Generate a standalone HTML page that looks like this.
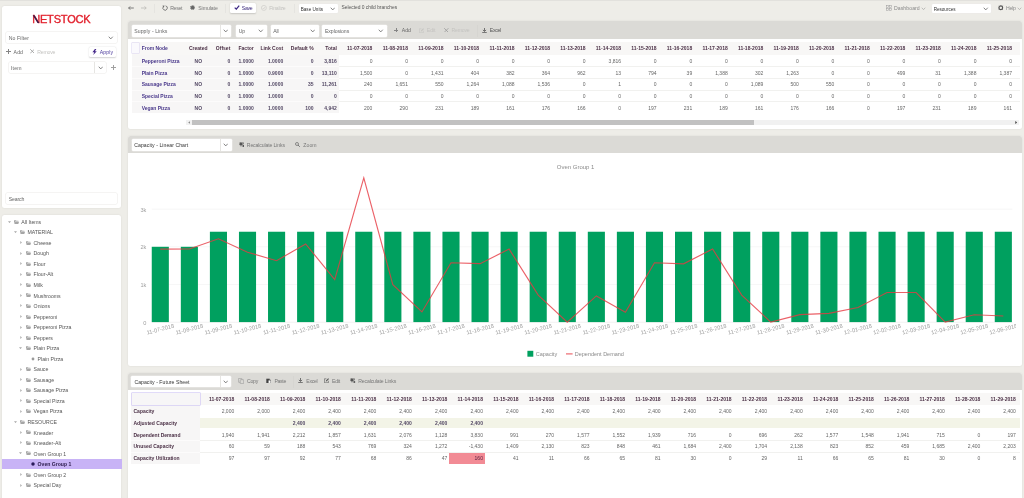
<!DOCTYPE html>
<html lang="en"><head><meta charset="utf-8"><title>Netstock - Capacity</title>
<style>
html,body{margin:0;padding:0;}
body{width:1024px;height:498px;overflow:hidden;background:#eeede8;font-family:"Liberation Sans",sans-serif;position:relative;}
#r{position:absolute;left:0;top:0;width:1024px;height:498px;overflow:hidden;will-change:transform;}
#r div,#r span,#r svg{position:absolute;}
#r span span{position:static;}
.t{white-space:nowrap;font-size:5.3px;color:#555;}
.panel{background:#fff;border-radius:2.5px;box-shadow:0 0 2px rgba(0,0,0,.09);overflow:hidden;}
.sel{background:#fff;border-radius:1.2px;box-shadow:0 0 0 .5px #ebeae7;}
.tb{color:#777;font-size:5.15px;}
.dis{color:#c4c3c0;}
.sm{font-size:4.6px;}
.th{color:#4a2f45;font-weight:bold;font-size:5px;}
.td{color:#666;font-size:5px;}
.tdb{color:#554a66;font-weight:bold;font-size:5px;}
.lnk{color:#4b3a8c;font-weight:bold;font-size:5px;letter-spacing:-0.03px;}
.tree{color:#555;font-size:5.2px;}
.ax{font-family:"Liberation Sans",sans-serif;fill:#a0a0a0;font-size:5.6px;}
</style></head>
<body><div id="r">
<div class="panel" style="left:2px;top:6.2px;width:119.3px;height:202.3px;"></div>
<div class="panel" style="left:2px;top:215.2px;width:119.3px;height:300px;"></div>
<div style="left:0.00px;top:0.00px;width:1024.00px;height:0.80px;background:#e2e1dd;"></div>
<span class="t " style="left:-38.70px;width:200px;text-align:center;top:12.20px;height:14px;line-height:14px;color:#e2232f;font-size:11px;letter-spacing:-0.18px;-webkit-text-stroke:0.38px #e2232f;">NETSTOCK</span>
<svg style="left:32.00px;top:15.00px;" width="9" height="9" viewBox="0 0 9 9"><path d="M0.7 0.3 L2.5 0.3 L7.3 8 L5.5 8Z" fill="#3a1a4a"/></svg>
<div class="sel" style="left:6.00px;top:32.00px;width:111.00px;height:11.20px;"></div>
<span class="t tb" style="left:8.75px;top:32.60px;height:10px;line-height:10px;font-size:5.15px;letter-spacing:0.099px;color:#666;">No Filter</span>
<svg style="left:108.05px;top:35.85px;" width="5.5" height="3.9" viewBox="0 0 5.5 3.9"><path d="M1 1 L2.75 2.9 L4.5 1" fill="none" stroke="#666" stroke-width="0.8" stroke-linecap="round" stroke-linejoin="round"/></svg>
<div style="left:6.42px;top:51.35px;width:4.50px;height:0.70px;background:#858585;"></div>
<div style="left:8.32px;top:49.45px;width:0.70px;height:4.50px;background:#858585;"></div>
<span class="t tb" style="left:13.60px;top:46.60px;height:10px;line-height:10px;font-size:5.15px;letter-spacing:0.118px;color:#666;">Add</span>
<svg style="left:29.90px;top:49.40px;" width="4.6" height="4.6" viewBox="0 0 4.6 4.6"><path d="M0.2 0.2 L4.3999999999999995 4.3999999999999995 M4.3999999999999995 0.2 L0.2 4.3999999999999995" stroke="#999" stroke-width="0.8" fill="none"/></svg>
<span class="t tb dis" style="left:37.20px;top:46.60px;height:10px;line-height:10px;font-size:5.15px;letter-spacing:-0.175px;">Remove</span>
<div style="left:89px;top:46.6px;width:27.3px;height:10.6px;background:#fff;border-radius:1.5px;box-shadow:0 0.3px 1.6px rgba(0,0,0,.18);"></div>
<svg style="left:92.20px;top:48.60px;" width="5.2" height="6" viewBox="0 0 5.2 6"><path d="M2.9 0 L0.4 3.3 L2.3 3.3 L1.2 6 L4.8 2.3 L2.9 2.3 L4.4 0Z" fill="#45288a"/></svg>
<span class="t tb" style="left:99.80px;top:46.70px;height:10px;line-height:10px;font-size:5.15px;letter-spacing:0.079px;color:#4b3a9c;">Apply</span>
<div class="sel" style="left:8.70px;top:61.80px;width:97.80px;height:11.70px;"></div>
<span class="t tb" style="left:10.70px;top:62.65px;height:10px;line-height:10px;font-size:5.15px;letter-spacing:0.300px;color:#666;">Item</span>
<div style="left:94.20px;top:61.80px;width:0.50px;height:11.70px;background:#e6e5e2;"></div>
<svg style="left:97.65px;top:65.90px;" width="5.5" height="3.9" viewBox="0 0 5.5 3.9"><path d="M1 1 L2.75 2.9 L4.5 1" fill="none" stroke="#666" stroke-width="0.8" stroke-linecap="round" stroke-linejoin="round"/></svg>
<div style="left:110.65px;top:66.60px;width:5.10px;height:1.00px;background:#a0a0a0;"></div>
<div style="left:112.70px;top:64.55px;width:1.00px;height:5.10px;background:#a0a0a0;"></div>
<div class="sel" style="left:6px;top:192.6px;width:111.4px;height:11.4px;"></div>
<span class="t tb" style="left:8.80px;top:193.50px;height:10px;line-height:10px;font-size:5.15px;letter-spacing:-0.144px;color:#666;">Search</span>
<svg style="left:7.60px;top:220.50px;" width="3" height="2.2" viewBox="0 0 3 2.2"><path d="M0 0.3 H3 L1.5 2.1Z" fill="#a8a8a8"/></svg>
<svg style="left:14.10px;top:219.70px;" width="5.2" height="4" viewBox="0 0 5.2 4"><path d="M0 0.2 H1.9 L2.5 0.8 H4.4 V1.5 H1.1 L0.2 3.7 H0Z" fill="#a6a6a6"/><path d="M1.3 1.7 H5.1 L4.3 3.9 H0.4Z" fill="#a6a6a6"/></svg>
<span class="t tree" style="left:21.30px;top:216.80px;height:10px;line-height:10px;">All Items</span>
<svg style="left:13.50px;top:231.03px;" width="3" height="2.2" viewBox="0 0 3 2.2"><path d="M0 0.3 H3 L1.5 2.1Z" fill="#a8a8a8"/></svg>
<svg style="left:20.00px;top:230.23px;" width="5.2" height="4" viewBox="0 0 5.2 4"><path d="M0 0.2 H1.9 L2.5 0.8 H4.4 V1.5 H1.1 L0.2 3.7 H0Z" fill="#a6a6a6"/><path d="M1.3 1.7 H5.1 L4.3 3.9 H0.4Z" fill="#a6a6a6"/></svg>
<span class="t tree" style="left:27.45px;top:227.33px;height:10px;line-height:10px;">MATERIAL</span>
<svg style="left:20.10px;top:241.27px;" width="2.2" height="3" viewBox="0 0 2.2 3"><path d="M0.3 0 L1.9 1.5 L0.3 3Z" fill="#a8a8a8"/></svg>
<svg style="left:25.90px;top:240.77px;" width="5.2" height="4" viewBox="0 0 5.2 4"><path d="M0 0.2 H1.9 L2.5 0.8 H4.4 V1.5 H1.1 L0.2 3.7 H0Z" fill="#a6a6a6"/><path d="M1.3 1.7 H5.1 L4.3 3.9 H0.4Z" fill="#a6a6a6"/></svg>
<span class="t tree" style="left:33.60px;top:237.87px;height:10px;line-height:10px;">Cheese</span>
<svg style="left:20.10px;top:251.80px;" width="2.2" height="3" viewBox="0 0 2.2 3"><path d="M0.3 0 L1.9 1.5 L0.3 3Z" fill="#a8a8a8"/></svg>
<svg style="left:25.90px;top:251.30px;" width="5.2" height="4" viewBox="0 0 5.2 4"><path d="M0 0.2 H1.9 L2.5 0.8 H4.4 V1.5 H1.1 L0.2 3.7 H0Z" fill="#a6a6a6"/><path d="M1.3 1.7 H5.1 L4.3 3.9 H0.4Z" fill="#a6a6a6"/></svg>
<span class="t tree" style="left:33.60px;top:248.40px;height:10px;line-height:10px;">Dough</span>
<svg style="left:20.10px;top:262.34px;" width="2.2" height="3" viewBox="0 0 2.2 3"><path d="M0.3 0 L1.9 1.5 L0.3 3Z" fill="#a8a8a8"/></svg>
<svg style="left:25.90px;top:261.84px;" width="5.2" height="4" viewBox="0 0 5.2 4"><path d="M0 0.2 H1.9 L2.5 0.8 H4.4 V1.5 H1.1 L0.2 3.7 H0Z" fill="#a6a6a6"/><path d="M1.3 1.7 H5.1 L4.3 3.9 H0.4Z" fill="#a6a6a6"/></svg>
<span class="t tree" style="left:33.60px;top:258.94px;height:10px;line-height:10px;">Flour</span>
<svg style="left:20.10px;top:272.88px;" width="2.2" height="3" viewBox="0 0 2.2 3"><path d="M0.3 0 L1.9 1.5 L0.3 3Z" fill="#a8a8a8"/></svg>
<svg style="left:25.90px;top:272.38px;" width="5.2" height="4" viewBox="0 0 5.2 4"><path d="M0 0.2 H1.9 L2.5 0.8 H4.4 V1.5 H1.1 L0.2 3.7 H0Z" fill="#a6a6a6"/><path d="M1.3 1.7 H5.1 L4.3 3.9 H0.4Z" fill="#a6a6a6"/></svg>
<span class="t tree" style="left:33.60px;top:269.48px;height:10px;line-height:10px;">Flour-Alt</span>
<svg style="left:20.10px;top:283.41px;" width="2.2" height="3" viewBox="0 0 2.2 3"><path d="M0.3 0 L1.9 1.5 L0.3 3Z" fill="#a8a8a8"/></svg>
<svg style="left:25.90px;top:282.91px;" width="5.2" height="4" viewBox="0 0 5.2 4"><path d="M0 0.2 H1.9 L2.5 0.8 H4.4 V1.5 H1.1 L0.2 3.7 H0Z" fill="#a6a6a6"/><path d="M1.3 1.7 H5.1 L4.3 3.9 H0.4Z" fill="#a6a6a6"/></svg>
<span class="t tree" style="left:33.60px;top:280.01px;height:10px;line-height:10px;">Milk</span>
<svg style="left:20.10px;top:293.94px;" width="2.2" height="3" viewBox="0 0 2.2 3"><path d="M0.3 0 L1.9 1.5 L0.3 3Z" fill="#a8a8a8"/></svg>
<svg style="left:25.90px;top:293.44px;" width="5.2" height="4" viewBox="0 0 5.2 4"><path d="M0 0.2 H1.9 L2.5 0.8 H4.4 V1.5 H1.1 L0.2 3.7 H0Z" fill="#a6a6a6"/><path d="M1.3 1.7 H5.1 L4.3 3.9 H0.4Z" fill="#a6a6a6"/></svg>
<span class="t tree" style="left:33.60px;top:290.55px;height:10px;line-height:10px;">Mushrooms</span>
<svg style="left:20.10px;top:304.48px;" width="2.2" height="3" viewBox="0 0 2.2 3"><path d="M0.3 0 L1.9 1.5 L0.3 3Z" fill="#a8a8a8"/></svg>
<svg style="left:25.90px;top:303.98px;" width="5.2" height="4" viewBox="0 0 5.2 4"><path d="M0 0.2 H1.9 L2.5 0.8 H4.4 V1.5 H1.1 L0.2 3.7 H0Z" fill="#a6a6a6"/><path d="M1.3 1.7 H5.1 L4.3 3.9 H0.4Z" fill="#a6a6a6"/></svg>
<span class="t tree" style="left:33.60px;top:301.08px;height:10px;line-height:10px;">Onions</span>
<svg style="left:20.10px;top:315.01px;" width="2.2" height="3" viewBox="0 0 2.2 3"><path d="M0.3 0 L1.9 1.5 L0.3 3Z" fill="#a8a8a8"/></svg>
<svg style="left:25.90px;top:314.51px;" width="5.2" height="4" viewBox="0 0 5.2 4"><path d="M0 0.2 H1.9 L2.5 0.8 H4.4 V1.5 H1.1 L0.2 3.7 H0Z" fill="#a6a6a6"/><path d="M1.3 1.7 H5.1 L4.3 3.9 H0.4Z" fill="#a6a6a6"/></svg>
<span class="t tree" style="left:33.60px;top:311.62px;height:10px;line-height:10px;">Pepperoni</span>
<svg style="left:20.10px;top:325.55px;" width="2.2" height="3" viewBox="0 0 2.2 3"><path d="M0.3 0 L1.9 1.5 L0.3 3Z" fill="#a8a8a8"/></svg>
<svg style="left:25.90px;top:325.05px;" width="5.2" height="4" viewBox="0 0 5.2 4"><path d="M0 0.2 H1.9 L2.5 0.8 H4.4 V1.5 H1.1 L0.2 3.7 H0Z" fill="#a6a6a6"/><path d="M1.3 1.7 H5.1 L4.3 3.9 H0.4Z" fill="#a6a6a6"/></svg>
<span class="t tree" style="left:33.60px;top:322.15px;height:10px;line-height:10px;">Pepperoni Pizza</span>
<svg style="left:20.10px;top:336.08px;" width="2.2" height="3" viewBox="0 0 2.2 3"><path d="M0.3 0 L1.9 1.5 L0.3 3Z" fill="#a8a8a8"/></svg>
<svg style="left:25.90px;top:335.58px;" width="5.2" height="4" viewBox="0 0 5.2 4"><path d="M0 0.2 H1.9 L2.5 0.8 H4.4 V1.5 H1.1 L0.2 3.7 H0Z" fill="#a6a6a6"/><path d="M1.3 1.7 H5.1 L4.3 3.9 H0.4Z" fill="#a6a6a6"/></svg>
<span class="t tree" style="left:33.60px;top:332.69px;height:10px;line-height:10px;">Peppers</span>
<svg style="left:19.40px;top:346.92px;" width="3" height="2.2" viewBox="0 0 3 2.2"><path d="M0 0.3 H3 L1.5 2.1Z" fill="#a8a8a8"/></svg>
<svg style="left:25.90px;top:346.12px;" width="5.2" height="4" viewBox="0 0 5.2 4"><path d="M0 0.2 H1.9 L2.5 0.8 H4.4 V1.5 H1.1 L0.2 3.7 H0Z" fill="#a6a6a6"/><path d="M1.3 1.7 H5.1 L4.3 3.9 H0.4Z" fill="#a6a6a6"/></svg>
<span class="t tree" style="left:33.60px;top:343.22px;height:10px;line-height:10px;">Plain Pizza</span>
<svg style="left:31.20px;top:356.65px;" width="4" height="4" viewBox="0 0 4 4"><circle cx="2" cy="2" r="1.4" fill="#9a9a9a"/></svg>
<span class="t tree" style="left:37.60px;top:353.75px;height:10px;line-height:10px;">Plain Pizza</span>
<svg style="left:20.10px;top:367.69px;" width="2.2" height="3" viewBox="0 0 2.2 3"><path d="M0.3 0 L1.9 1.5 L0.3 3Z" fill="#a8a8a8"/></svg>
<svg style="left:25.90px;top:367.19px;" width="5.2" height="4" viewBox="0 0 5.2 4"><path d="M0 0.2 H1.9 L2.5 0.8 H4.4 V1.5 H1.1 L0.2 3.7 H0Z" fill="#a6a6a6"/><path d="M1.3 1.7 H5.1 L4.3 3.9 H0.4Z" fill="#a6a6a6"/></svg>
<span class="t tree" style="left:33.60px;top:364.29px;height:10px;line-height:10px;">Sauce</span>
<svg style="left:20.10px;top:378.23px;" width="2.2" height="3" viewBox="0 0 2.2 3"><path d="M0.3 0 L1.9 1.5 L0.3 3Z" fill="#a8a8a8"/></svg>
<svg style="left:25.90px;top:377.73px;" width="5.2" height="4" viewBox="0 0 5.2 4"><path d="M0 0.2 H1.9 L2.5 0.8 H4.4 V1.5 H1.1 L0.2 3.7 H0Z" fill="#a6a6a6"/><path d="M1.3 1.7 H5.1 L4.3 3.9 H0.4Z" fill="#a6a6a6"/></svg>
<span class="t tree" style="left:33.60px;top:374.83px;height:10px;line-height:10px;">Sausage</span>
<svg style="left:20.10px;top:388.76px;" width="2.2" height="3" viewBox="0 0 2.2 3"><path d="M0.3 0 L1.9 1.5 L0.3 3Z" fill="#a8a8a8"/></svg>
<svg style="left:25.90px;top:388.26px;" width="5.2" height="4" viewBox="0 0 5.2 4"><path d="M0 0.2 H1.9 L2.5 0.8 H4.4 V1.5 H1.1 L0.2 3.7 H0Z" fill="#a6a6a6"/><path d="M1.3 1.7 H5.1 L4.3 3.9 H0.4Z" fill="#a6a6a6"/></svg>
<span class="t tree" style="left:33.60px;top:385.36px;height:10px;line-height:10px;">Sausage Pizza</span>
<svg style="left:20.10px;top:399.29px;" width="2.2" height="3" viewBox="0 0 2.2 3"><path d="M0.3 0 L1.9 1.5 L0.3 3Z" fill="#a8a8a8"/></svg>
<svg style="left:25.90px;top:398.79px;" width="5.2" height="4" viewBox="0 0 5.2 4"><path d="M0 0.2 H1.9 L2.5 0.8 H4.4 V1.5 H1.1 L0.2 3.7 H0Z" fill="#a6a6a6"/><path d="M1.3 1.7 H5.1 L4.3 3.9 H0.4Z" fill="#a6a6a6"/></svg>
<span class="t tree" style="left:33.60px;top:395.89px;height:10px;line-height:10px;">Special Pizza</span>
<svg style="left:20.10px;top:409.83px;" width="2.2" height="3" viewBox="0 0 2.2 3"><path d="M0.3 0 L1.9 1.5 L0.3 3Z" fill="#a8a8a8"/></svg>
<svg style="left:25.90px;top:409.33px;" width="5.2" height="4" viewBox="0 0 5.2 4"><path d="M0 0.2 H1.9 L2.5 0.8 H4.4 V1.5 H1.1 L0.2 3.7 H0Z" fill="#a6a6a6"/><path d="M1.3 1.7 H5.1 L4.3 3.9 H0.4Z" fill="#a6a6a6"/></svg>
<span class="t tree" style="left:33.60px;top:406.43px;height:10px;line-height:10px;">Vegan Pizza</span>
<svg style="left:13.50px;top:420.67px;" width="3" height="2.2" viewBox="0 0 3 2.2"><path d="M0 0.3 H3 L1.5 2.1Z" fill="#a8a8a8"/></svg>
<svg style="left:20.00px;top:419.87px;" width="5.2" height="4" viewBox="0 0 5.2 4"><path d="M0 0.2 H1.9 L2.5 0.8 H4.4 V1.5 H1.1 L0.2 3.7 H0Z" fill="#a6a6a6"/><path d="M1.3 1.7 H5.1 L4.3 3.9 H0.4Z" fill="#a6a6a6"/></svg>
<span class="t tree" style="left:27.45px;top:416.97px;height:10px;line-height:10px;">RESOURCE</span>
<svg style="left:20.10px;top:430.90px;" width="2.2" height="3" viewBox="0 0 2.2 3"><path d="M0.3 0 L1.9 1.5 L0.3 3Z" fill="#a8a8a8"/></svg>
<svg style="left:25.90px;top:430.40px;" width="5.2" height="4" viewBox="0 0 5.2 4"><path d="M0 0.2 H1.9 L2.5 0.8 H4.4 V1.5 H1.1 L0.2 3.7 H0Z" fill="#a6a6a6"/><path d="M1.3 1.7 H5.1 L4.3 3.9 H0.4Z" fill="#a6a6a6"/></svg>
<span class="t tree" style="left:33.60px;top:427.50px;height:10px;line-height:10px;">Kneader</span>
<svg style="left:20.10px;top:441.44px;" width="2.2" height="3" viewBox="0 0 2.2 3"><path d="M0.3 0 L1.9 1.5 L0.3 3Z" fill="#a8a8a8"/></svg>
<svg style="left:25.90px;top:440.94px;" width="5.2" height="4" viewBox="0 0 5.2 4"><path d="M0 0.2 H1.9 L2.5 0.8 H4.4 V1.5 H1.1 L0.2 3.7 H0Z" fill="#a6a6a6"/><path d="M1.3 1.7 H5.1 L4.3 3.9 H0.4Z" fill="#a6a6a6"/></svg>
<span class="t tree" style="left:33.60px;top:438.04px;height:10px;line-height:10px;">Kneader-Alt</span>
<svg style="left:19.40px;top:452.27px;" width="3" height="2.2" viewBox="0 0 3 2.2"><path d="M0 0.3 H3 L1.5 2.1Z" fill="#a8a8a8"/></svg>
<svg style="left:25.90px;top:451.47px;" width="5.2" height="4" viewBox="0 0 5.2 4"><path d="M0 0.2 H1.9 L2.5 0.8 H4.4 V1.5 H1.1 L0.2 3.7 H0Z" fill="#a6a6a6"/><path d="M1.3 1.7 H5.1 L4.3 3.9 H0.4Z" fill="#a6a6a6"/></svg>
<span class="t tree" style="left:33.60px;top:448.57px;height:10px;line-height:10px;">Oven Group 1</span>
<div style="left:2.00px;top:459.11px;width:119.50px;height:9.90px;background:#c8b3f6;"></div>
<svg style="left:31.20px;top:462.00px;" width="4" height="4" viewBox="0 0 4 4"><circle cx="2" cy="2" r="1.75" fill="#2a1a5a"/></svg>
<span class="t tree" style="left:37.60px;top:459.11px;height:10px;line-height:10px;color:#2a1a4a;font-weight:bold;font-size:5.1px;">Oven Group 1</span>
<svg style="left:20.10px;top:473.04px;" width="2.2" height="3" viewBox="0 0 2.2 3"><path d="M0.3 0 L1.9 1.5 L0.3 3Z" fill="#a8a8a8"/></svg>
<svg style="left:25.90px;top:472.54px;" width="5.2" height="4" viewBox="0 0 5.2 4"><path d="M0 0.2 H1.9 L2.5 0.8 H4.4 V1.5 H1.1 L0.2 3.7 H0Z" fill="#a6a6a6"/><path d="M1.3 1.7 H5.1 L4.3 3.9 H0.4Z" fill="#a6a6a6"/></svg>
<span class="t tree" style="left:33.60px;top:469.64px;height:10px;line-height:10px;">Oven Group 2</span>
<svg style="left:20.10px;top:483.57px;" width="2.2" height="3" viewBox="0 0 2.2 3"><path d="M0.3 0 L1.9 1.5 L0.3 3Z" fill="#a8a8a8"/></svg>
<svg style="left:25.90px;top:483.07px;" width="5.2" height="4" viewBox="0 0 5.2 4"><path d="M0 0.2 H1.9 L2.5 0.8 H4.4 V1.5 H1.1 L0.2 3.7 H0Z" fill="#a6a6a6"/><path d="M1.3 1.7 H5.1 L4.3 3.9 H0.4Z" fill="#a6a6a6"/></svg>
<span class="t tree" style="left:33.60px;top:480.18px;height:10px;line-height:10px;">Special Day</span>
<svg style="left:128.10px;top:5.90px;" width="5.8" height="4" viewBox="0 0 5.8 4"><path d="M5.8 2 H0.6 M2.2 0.4 L0.6 2 L2.2 3.6" fill="none" stroke="#666" stroke-width="0.85"/></svg>
<svg style="left:141.40px;top:5.90px;" width="5.8" height="4" viewBox="0 0 5.8 4"><path d="M0 2 H5.2 M3.5999999999999996 0.4 L5.2 2 L3.5999999999999996 3.6" fill="none" stroke="#bdbcb8" stroke-width="0.85"/></svg>
<div style="left:154.10px;top:3.80px;width:0.50px;height:8.80px;background:#e5e4e0;"></div>
<svg style="left:161.70px;top:5.00px;" width="6" height="6" viewBox="0 0 6 6"><path d="M1.5 1.5 A2.2 2.2 0 1 0 3.6 0.85" fill="none" stroke="#666" stroke-width="0.8"/><path d="M0.3 0.7 L2.5 0.5 L1.8 2.5Z" fill="#666"/></svg>
<span class="t tb" style="left:170.20px;top:3.30px;height:10px;line-height:10px;font-size:5.15px;letter-spacing:-0.300px;">Reset</span>
<svg style="left:190.30px;top:5.30px;" width="5.2" height="5.2" viewBox="0 0 5.2 5.2"><circle cx="2.6" cy="2.6" r="1.9" fill="#666"/><circle cx="2.6" cy="2.6" r="2.3" fill="none" stroke="#666" stroke-width="0.9" stroke-dasharray="0.9 0.9"/></svg>
<span class="t tb" style="left:198.20px;top:3.30px;height:10px;line-height:10px;font-size:5.15px;letter-spacing:-0.048px;">Simulate</span>
<div style="left:225.30px;top:3.80px;width:0.50px;height:8.80px;background:#e5e4e0;"></div>
<div style="left:230px;top:3.3px;width:26.3px;height:10.1px;background:#fff;border-radius:1.5px;box-shadow:0 0.3px 1.6px rgba(0,0,0,.16);"></div>
<svg style="left:233.60px;top:5.30px;" width="6" height="5" viewBox="0 0 6 5"><path d="M0.7 2.6 L2.3 4.1 L5.2 0.7" fill="none" stroke="#3f2a86" stroke-width="1.3"/></svg>
<span class="t tb" style="left:241.75px;top:3.40px;height:10px;line-height:10px;font-size:5.15px;letter-spacing:-0.300px;color:#3b2a7c;">Save</span>
<svg style="left:261.10px;top:5.20px;" width="5.8" height="5.8" viewBox="0 0 5.8 5.8"><circle cx="2.9" cy="2.9" r="2.5" fill="none" stroke="#c9c8c5" stroke-width="0.6"/><path d="M1.7 3 L2.6 3.9 L4.2 2" fill="none" stroke="#c9c8c5" stroke-width="0.6"/></svg>
<span class="t tb dis" style="left:269.25px;top:3.30px;height:10px;line-height:10px;font-size:5.15px;letter-spacing:-0.178px;">Finalize</span>
<div style="left:293.50px;top:3.80px;width:0.50px;height:8.80px;background:#e5e4e0;"></div>
<div class="sel" style="left:298.80px;top:4.00px;width:39.20px;height:9.20px;"></div>
<span class="t tb sm" style="left:300.75px;top:5.20px;height:10px;line-height:10px;font-size:4.6px;letter-spacing:0.001px;color:#333;">Base Units</span>
<svg style="left:329.95px;top:6.85px;" width="5.5" height="3.9" viewBox="0 0 5.5 3.9"><path d="M1 1 L2.75 2.9 L4.5 1" fill="none" stroke="#666" stroke-width="0.8" stroke-linecap="round" stroke-linejoin="round"/></svg>
<span class="t tb" style="left:341.50px;top:2.80px;height:10px;line-height:10px;font-size:4.9px;letter-spacing:-0.013px;color:#555;">Selected 0 child branches</span>
<svg style="left:886.00px;top:5.20px;" width="6" height="6" viewBox="0 0 6 6"><g fill="none" stroke="#999" stroke-width="0.5"><rect x="0.4" y="0.4" width="2.1" height="2.1"/><rect x="3.3" y="0.4" width="2.1" height="2.1"/><rect x="0.4" y="3.3" width="2.1" height="2.1"/><rect x="3.3" y="3.3" width="2.1" height="2.1"/></g></svg>
<span class="t tb" style="left:894.00px;top:3.30px;height:10px;line-height:10px;font-size:5.15px;letter-spacing:0.069px;color:#888;">Dashboard</span>
<svg style="left:921.10px;top:6.80px;" width="5" height="3.6" viewBox="0 0 5 3.6"><path d="M1 1 L2.5 2.6 L4 1" fill="none" stroke="#999" stroke-width="0.6" stroke-linecap="round" stroke-linejoin="round"/></svg>
<div class="sel" style="left:931.90px;top:3.80px;width:59.20px;height:9.30px;"></div>
<span class="t tb sm" style="left:933.75px;top:5.05px;height:10px;line-height:10px;font-size:4.6px;letter-spacing:-0.030px;color:#333;">Resources</span>
<svg style="left:983.45px;top:6.70px;" width="5.5" height="3.9" viewBox="0 0 5.5 3.9"><path d="M1 1 L2.75 2.9 L4.5 1" fill="none" stroke="#666" stroke-width="0.8" stroke-linecap="round" stroke-linejoin="round"/></svg>
<svg style="left:998.00px;top:5.40px;" width="5.6" height="5.6" viewBox="0 0 5.6 5.6"><circle cx="2.8" cy="2.8" r="1.85" fill="none" stroke="#555" stroke-width="1.2"/><path d="M0.9 0.9 L1.6 1.6 M4.7 0.9 L4 1.6 M0.9 4.7 L1.6 4 M4.7 4.7 L4 4" stroke="#666" stroke-width="0.9"/></svg>
<span class="t tb" style="left:1006.00px;top:3.30px;height:10px;line-height:10px;font-size:5.15px;letter-spacing:-0.197px;color:#888;">Help</span>
<svg style="left:1017.10px;top:6.80px;" width="5" height="3.6" viewBox="0 0 5 3.6"><path d="M1 1 L2.5 2.6 L4 1" fill="none" stroke="#999" stroke-width="0.6" stroke-linecap="round" stroke-linejoin="round"/></svg>
<div class="panel" style="left:128.3px;top:21px;width:893.4000000000001px;height:107.80000000000001px;"><div style="left:0;top:0;width:100%;height:18.200000000000003px;background:#dbdad6;"></div></div>
<div class="sel" style="left:131.50px;top:25.20px;width:99.80px;height:11.80px;"></div>
<span class="t tb" style="left:134.25px;top:26.10px;height:10px;line-height:10px;font-size:5.15px;letter-spacing:0.069px;color:#666;">Supply - Links</span>
<div style="left:219.70px;top:25.20px;width:0.50px;height:11.80px;background:#e6e5e2;"></div>
<svg style="left:222.85px;top:29.35px;" width="5.5" height="3.9" viewBox="0 0 5.5 3.9"><path d="M1 1 L2.75 2.9 L4.5 1" fill="none" stroke="#666" stroke-width="0.8" stroke-linecap="round" stroke-linejoin="round"/></svg>
<div class="sel" style="left:236.20px;top:25.20px;width:30.60px;height:11.80px;"></div>
<span class="t tb" style="left:238.75px;top:26.10px;height:10px;line-height:10px;font-size:5.15px;letter-spacing:-0.300px;color:#666;">Up</span>
<svg style="left:258.25px;top:29.35px;" width="5.5" height="3.9" viewBox="0 0 5.5 3.9"><path d="M1 1 L2.75 2.9 L4.5 1" fill="none" stroke="#666" stroke-width="0.8" stroke-linecap="round" stroke-linejoin="round"/></svg>
<div class="sel" style="left:270.60px;top:25.20px;width:48.00px;height:11.80px;"></div>
<span class="t tb" style="left:273.25px;top:26.10px;height:10px;line-height:10px;font-size:5.15px;letter-spacing:-0.112px;color:#666;">All</span>
<svg style="left:309.85px;top:29.35px;" width="5.5" height="3.9" viewBox="0 0 5.5 3.9"><path d="M1 1 L2.75 2.9 L4.5 1" fill="none" stroke="#666" stroke-width="0.8" stroke-linecap="round" stroke-linejoin="round"/></svg>
<div class="sel" style="left:322.00px;top:25.20px;width:65.20px;height:11.80px;"></div>
<span class="t tb" style="left:325.00px;top:26.10px;height:10px;line-height:10px;font-size:5.15px;letter-spacing:-0.073px;color:#666;">Explosions</span>
<svg style="left:378.45px;top:29.35px;" width="5.5" height="3.9" viewBox="0 0 5.5 3.9"><path d="M1 1 L2.75 2.9 L4.5 1" fill="none" stroke="#666" stroke-width="0.8" stroke-linecap="round" stroke-linejoin="round"/></svg>
<div style="left:393.85px;top:29.85px;width:4.50px;height:0.70px;background:#858585;"></div>
<div style="left:395.75px;top:27.95px;width:0.70px;height:4.50px;background:#858585;"></div>
<span class="t tb" style="left:401.75px;top:25.20px;height:10px;line-height:10px;font-size:5.15px;letter-spacing:0.043px;color:#666;">Add</span>
<svg style="left:418.60px;top:27.60px;" width="5.4" height="5.2" viewBox="0 0 5.4 5.2"><path d="M2.4 0.8 H0.4 V4.8 H4.4 V2.8" fill="none" stroke="#c6c5c2" stroke-width="0.6"/><path d="M1.8 3.4 L2 2.4 L4.2 0.2 L5 1 L2.8 3.2Z" fill="#c6c5c2"/></svg>
<span class="t tb dis" style="left:426.75px;top:25.20px;height:10px;line-height:10px;font-size:5.15px;letter-spacing:-0.041px;">Edit</span>
<svg style="left:444.20px;top:27.90px;" width="4.6" height="4.6" viewBox="0 0 4.6 4.6"><path d="M0.2 0.2 L4.3999999999999995 4.3999999999999995 M4.3999999999999995 0.2 L0.2 4.3999999999999995" stroke="#999" stroke-width="0.8" fill="none"/></svg>
<span class="t tb dis" style="left:451.50px;top:25.20px;height:10px;line-height:10px;font-size:5.15px;letter-spacing:-0.185px;">Remove</span>
<div style="left:477.10px;top:24.50px;width:0.50px;height:12.00px;background:#d6d5d1;"></div>
<svg style="left:481.80px;top:27.50px;" width="5" height="5.4" viewBox="0 0 5 5.4"><path d="M2.5 0 V3.2 M0.9 1.9 L2.5 3.5 L4.1 1.9" fill="none" stroke="#555" stroke-width="0.8"/><path d="M0.2 4.7 H4.8" stroke="#555" stroke-width="0.9"/></svg>
<span class="t tb" style="left:489.75px;top:25.20px;height:10px;line-height:10px;font-size:5.15px;letter-spacing:-0.300px;color:#555;">Excel</span>
<div style="left:131.70px;top:41.60px;width:888.10px;height:13.60px;background:#f8f7f6;"></div>
<div style="left:131.70px;top:55.00px;width:207.10px;height:58.30px;background:#f7f6f6;"></div>
<div style="left:131.70px;top:66.41px;width:207.10px;height:0.40px;background:#fcfbfb;"></div>
<div style="left:338.80px;top:66.41px;width:681.00px;height:0.40px;background:#f1f1ef;"></div>
<div style="left:131.70px;top:78.07px;width:207.10px;height:0.40px;background:#fcfbfb;"></div>
<div style="left:338.80px;top:78.07px;width:681.00px;height:0.40px;background:#f1f1ef;"></div>
<div style="left:131.70px;top:89.73px;width:207.10px;height:0.40px;background:#fcfbfb;"></div>
<div style="left:338.80px;top:89.73px;width:681.00px;height:0.40px;background:#f1f1ef;"></div>
<div style="left:131.70px;top:101.39px;width:207.10px;height:0.40px;background:#fcfbfb;"></div>
<div style="left:338.80px;top:101.39px;width:681.00px;height:0.40px;background:#f1f1ef;"></div>
<div style="left:131.9px;top:43px;width:7.0px;height:10.4px;background:#faf9fd;box-shadow:0 0 0 .5px #d9d4f2;"></div>
<span class="t lnk" style="left:141.70px;top:43.40px;height:10px;line-height:10px;">From Node</span>
<span class="t th" style="left:98.30px;width:200px;text-align:center;top:43.40px;height:10px;line-height:10px;">Created</span>
<span class="t th" style="right:793.70px;top:43.40px;height:10px;line-height:10px;">Offset</span>
<span class="t th" style="right:770.20px;top:43.40px;height:10px;line-height:10px;">Factor</span>
<span class="t th" style="right:740.80px;top:43.40px;height:10px;line-height:10px;">Link Cost</span>
<span class="t th" style="right:710.40px;top:43.40px;height:10px;line-height:10px;">Default %</span>
<span class="t th" style="right:687.20px;top:43.40px;height:10px;line-height:10px;">Total</span>
<span class="t th" style="right:651.60px;top:43.40px;height:10px;line-height:10px;">11-07-2018</span>
<span class="t th" style="right:616.07px;top:43.40px;height:10px;line-height:10px;">11-08-2018</span>
<span class="t th" style="right:580.54px;top:43.40px;height:10px;line-height:10px;">11-09-2018</span>
<span class="t th" style="right:545.01px;top:43.40px;height:10px;line-height:10px;">11-10-2018</span>
<span class="t th" style="right:509.48px;top:43.40px;height:10px;line-height:10px;">11-11-2018</span>
<span class="t th" style="right:473.95px;top:43.40px;height:10px;line-height:10px;">11-12-2018</span>
<span class="t th" style="right:438.42px;top:43.40px;height:10px;line-height:10px;">11-13-2018</span>
<span class="t th" style="right:402.89px;top:43.40px;height:10px;line-height:10px;">11-14-2018</span>
<span class="t th" style="right:367.36px;top:43.40px;height:10px;line-height:10px;">11-15-2018</span>
<span class="t th" style="right:331.83px;top:43.40px;height:10px;line-height:10px;">11-16-2018</span>
<span class="t th" style="right:296.30px;top:43.40px;height:10px;line-height:10px;">11-17-2018</span>
<span class="t th" style="right:260.77px;top:43.40px;height:10px;line-height:10px;">11-18-2018</span>
<span class="t th" style="right:225.24px;top:43.40px;height:10px;line-height:10px;">11-19-2018</span>
<span class="t th" style="right:189.71px;top:43.40px;height:10px;line-height:10px;">11-20-2018</span>
<span class="t th" style="right:154.18px;top:43.40px;height:10px;line-height:10px;">11-21-2018</span>
<span class="t th" style="right:118.65px;top:43.40px;height:10px;line-height:10px;">11-22-2018</span>
<span class="t th" style="right:83.12px;top:43.40px;height:10px;line-height:10px;">11-23-2018</span>
<span class="t th" style="right:47.59px;top:43.40px;height:10px;line-height:10px;">11-24-2018</span>
<span class="t th" style="right:12.06px;top:43.40px;height:10px;line-height:10px;">11-25-2018</span>
<span class="t lnk" style="left:141.70px;top:55.90px;height:10px;line-height:10px;">Pepperoni Pizza</span>
<span class="t tdb" style="left:98.30px;width:200px;text-align:center;top:55.90px;height:10px;line-height:10px;">NO</span>
<span class="t tdb" style="right:793.70px;top:55.90px;height:10px;line-height:10px;">0</span>
<span class="t tdb" style="right:770.20px;top:55.90px;height:10px;line-height:10px;">1.0000</span>
<span class="t tdb" style="right:740.80px;top:55.90px;height:10px;line-height:10px;">1.0000</span>
<span class="t tdb" style="right:710.40px;top:55.90px;height:10px;line-height:10px;">0</span>
<span class="t tdb" style="right:687.20px;top:55.90px;height:10px;line-height:10px;">3,816</span>
<span class="t td" style="right:651.60px;top:55.90px;height:10px;line-height:10px;">0</span>
<span class="t td" style="right:616.07px;top:55.90px;height:10px;line-height:10px;">0</span>
<span class="t td" style="right:580.54px;top:55.90px;height:10px;line-height:10px;">0</span>
<span class="t td" style="right:545.01px;top:55.90px;height:10px;line-height:10px;">0</span>
<span class="t td" style="right:509.48px;top:55.90px;height:10px;line-height:10px;">0</span>
<span class="t td" style="right:473.95px;top:55.90px;height:10px;line-height:10px;">0</span>
<span class="t td" style="right:438.42px;top:55.90px;height:10px;line-height:10px;">0</span>
<span class="t td" style="right:402.89px;top:55.90px;height:10px;line-height:10px;">3,816</span>
<span class="t td" style="right:367.36px;top:55.90px;height:10px;line-height:10px;">0</span>
<span class="t td" style="right:331.83px;top:55.90px;height:10px;line-height:10px;">0</span>
<span class="t td" style="right:296.30px;top:55.90px;height:10px;line-height:10px;">0</span>
<span class="t td" style="right:260.77px;top:55.90px;height:10px;line-height:10px;">0</span>
<span class="t td" style="right:225.24px;top:55.90px;height:10px;line-height:10px;">0</span>
<span class="t td" style="right:189.71px;top:55.90px;height:10px;line-height:10px;">0</span>
<span class="t td" style="right:154.18px;top:55.90px;height:10px;line-height:10px;">0</span>
<span class="t td" style="right:118.65px;top:55.90px;height:10px;line-height:10px;">0</span>
<span class="t td" style="right:83.12px;top:55.90px;height:10px;line-height:10px;">0</span>
<span class="t td" style="right:47.59px;top:55.90px;height:10px;line-height:10px;">0</span>
<span class="t td" style="right:12.06px;top:55.90px;height:10px;line-height:10px;">0</span>
<span class="t lnk" style="left:141.70px;top:67.60px;height:10px;line-height:10px;">Plain Pizza</span>
<span class="t tdb" style="left:98.30px;width:200px;text-align:center;top:67.60px;height:10px;line-height:10px;">NO</span>
<span class="t tdb" style="right:793.70px;top:67.60px;height:10px;line-height:10px;">0</span>
<span class="t tdb" style="right:770.20px;top:67.60px;height:10px;line-height:10px;">1.0000</span>
<span class="t tdb" style="right:740.80px;top:67.60px;height:10px;line-height:10px;">0.9000</span>
<span class="t tdb" style="right:710.40px;top:67.60px;height:10px;line-height:10px;">0</span>
<span class="t tdb" style="right:687.20px;top:67.60px;height:10px;line-height:10px;">13,110</span>
<span class="t td" style="right:651.60px;top:67.60px;height:10px;line-height:10px;">1,500</span>
<span class="t td" style="right:616.07px;top:67.60px;height:10px;line-height:10px;">0</span>
<span class="t td" style="right:580.54px;top:67.60px;height:10px;line-height:10px;">1,431</span>
<span class="t td" style="right:545.01px;top:67.60px;height:10px;line-height:10px;">404</span>
<span class="t td" style="right:509.48px;top:67.60px;height:10px;line-height:10px;">382</span>
<span class="t td" style="right:473.95px;top:67.60px;height:10px;line-height:10px;">364</span>
<span class="t td" style="right:438.42px;top:67.60px;height:10px;line-height:10px;">962</span>
<span class="t td" style="right:402.89px;top:67.60px;height:10px;line-height:10px;">13</span>
<span class="t td" style="right:367.36px;top:67.60px;height:10px;line-height:10px;">794</span>
<span class="t td" style="right:331.83px;top:67.60px;height:10px;line-height:10px;">39</span>
<span class="t td" style="right:296.30px;top:67.60px;height:10px;line-height:10px;">1,388</span>
<span class="t td" style="right:260.77px;top:67.60px;height:10px;line-height:10px;">302</span>
<span class="t td" style="right:225.24px;top:67.60px;height:10px;line-height:10px;">1,263</span>
<span class="t td" style="right:189.71px;top:67.60px;height:10px;line-height:10px;">0</span>
<span class="t td" style="right:154.18px;top:67.60px;height:10px;line-height:10px;">0</span>
<span class="t td" style="right:118.65px;top:67.60px;height:10px;line-height:10px;">499</span>
<span class="t td" style="right:83.12px;top:67.60px;height:10px;line-height:10px;">31</span>
<span class="t td" style="right:47.59px;top:67.60px;height:10px;line-height:10px;">1,388</span>
<span class="t td" style="right:12.06px;top:67.60px;height:10px;line-height:10px;">1,387</span>
<span class="t lnk" style="left:141.70px;top:79.30px;height:10px;line-height:10px;">Sausage Pizza</span>
<span class="t tdb" style="left:98.30px;width:200px;text-align:center;top:79.30px;height:10px;line-height:10px;">NO</span>
<span class="t tdb" style="right:793.70px;top:79.30px;height:10px;line-height:10px;">0</span>
<span class="t tdb" style="right:770.20px;top:79.30px;height:10px;line-height:10px;">1.0000</span>
<span class="t tdb" style="right:740.80px;top:79.30px;height:10px;line-height:10px;">1.0000</span>
<span class="t tdb" style="right:710.40px;top:79.30px;height:10px;line-height:10px;">35</span>
<span class="t tdb" style="right:687.20px;top:79.30px;height:10px;line-height:10px;">11,261</span>
<span class="t td" style="right:651.60px;top:79.30px;height:10px;line-height:10px;">240</span>
<span class="t td" style="right:616.07px;top:79.30px;height:10px;line-height:10px;">1,651</span>
<span class="t td" style="right:580.54px;top:79.30px;height:10px;line-height:10px;">550</span>
<span class="t td" style="right:545.01px;top:79.30px;height:10px;line-height:10px;">1,264</span>
<span class="t td" style="right:509.48px;top:79.30px;height:10px;line-height:10px;">1,088</span>
<span class="t td" style="right:473.95px;top:79.30px;height:10px;line-height:10px;">1,536</span>
<span class="t td" style="right:438.42px;top:79.30px;height:10px;line-height:10px;">0</span>
<span class="t td" style="right:402.89px;top:79.30px;height:10px;line-height:10px;">1</span>
<span class="t td" style="right:367.36px;top:79.30px;height:10px;line-height:10px;">0</span>
<span class="t td" style="right:331.83px;top:79.30px;height:10px;line-height:10px;">0</span>
<span class="t td" style="right:296.30px;top:79.30px;height:10px;line-height:10px;">0</span>
<span class="t td" style="right:260.77px;top:79.30px;height:10px;line-height:10px;">1,089</span>
<span class="t td" style="right:225.24px;top:79.30px;height:10px;line-height:10px;">500</span>
<span class="t td" style="right:189.71px;top:79.30px;height:10px;line-height:10px;">550</span>
<span class="t td" style="right:154.18px;top:79.30px;height:10px;line-height:10px;">0</span>
<span class="t td" style="right:118.65px;top:79.30px;height:10px;line-height:10px;">0</span>
<span class="t td" style="right:83.12px;top:79.30px;height:10px;line-height:10px;">0</span>
<span class="t td" style="right:47.59px;top:79.30px;height:10px;line-height:10px;">0</span>
<span class="t td" style="right:12.06px;top:79.30px;height:10px;line-height:10px;">0</span>
<span class="t lnk" style="left:141.70px;top:91.00px;height:10px;line-height:10px;">Special Pizza</span>
<span class="t tdb" style="left:98.30px;width:200px;text-align:center;top:91.00px;height:10px;line-height:10px;">NO</span>
<span class="t tdb" style="right:793.70px;top:91.00px;height:10px;line-height:10px;">0</span>
<span class="t tdb" style="right:770.20px;top:91.00px;height:10px;line-height:10px;">1.0000</span>
<span class="t tdb" style="right:740.80px;top:91.00px;height:10px;line-height:10px;">1.0000</span>
<span class="t tdb" style="right:710.40px;top:91.00px;height:10px;line-height:10px;">0</span>
<span class="t tdb" style="right:687.20px;top:91.00px;height:10px;line-height:10px;">0</span>
<span class="t td" style="right:651.60px;top:91.00px;height:10px;line-height:10px;">0</span>
<span class="t td" style="right:616.07px;top:91.00px;height:10px;line-height:10px;">0</span>
<span class="t td" style="right:580.54px;top:91.00px;height:10px;line-height:10px;">0</span>
<span class="t td" style="right:545.01px;top:91.00px;height:10px;line-height:10px;">0</span>
<span class="t td" style="right:509.48px;top:91.00px;height:10px;line-height:10px;">0</span>
<span class="t td" style="right:473.95px;top:91.00px;height:10px;line-height:10px;">0</span>
<span class="t td" style="right:438.42px;top:91.00px;height:10px;line-height:10px;">0</span>
<span class="t td" style="right:402.89px;top:91.00px;height:10px;line-height:10px;">0</span>
<span class="t td" style="right:367.36px;top:91.00px;height:10px;line-height:10px;">0</span>
<span class="t td" style="right:331.83px;top:91.00px;height:10px;line-height:10px;">0</span>
<span class="t td" style="right:296.30px;top:91.00px;height:10px;line-height:10px;">0</span>
<span class="t td" style="right:260.77px;top:91.00px;height:10px;line-height:10px;">0</span>
<span class="t td" style="right:225.24px;top:91.00px;height:10px;line-height:10px;">0</span>
<span class="t td" style="right:189.71px;top:91.00px;height:10px;line-height:10px;">0</span>
<span class="t td" style="right:154.18px;top:91.00px;height:10px;line-height:10px;">0</span>
<span class="t td" style="right:118.65px;top:91.00px;height:10px;line-height:10px;">0</span>
<span class="t td" style="right:83.12px;top:91.00px;height:10px;line-height:10px;">0</span>
<span class="t td" style="right:47.59px;top:91.00px;height:10px;line-height:10px;">0</span>
<span class="t td" style="right:12.06px;top:91.00px;height:10px;line-height:10px;">0</span>
<span class="t lnk" style="left:141.70px;top:102.70px;height:10px;line-height:10px;">Vegan Pizza</span>
<span class="t tdb" style="left:98.30px;width:200px;text-align:center;top:102.70px;height:10px;line-height:10px;">NO</span>
<span class="t tdb" style="right:793.70px;top:102.70px;height:10px;line-height:10px;">0</span>
<span class="t tdb" style="right:770.20px;top:102.70px;height:10px;line-height:10px;">1.0000</span>
<span class="t tdb" style="right:740.80px;top:102.70px;height:10px;line-height:10px;">1.0000</span>
<span class="t tdb" style="right:710.40px;top:102.70px;height:10px;line-height:10px;">100</span>
<span class="t tdb" style="right:687.20px;top:102.70px;height:10px;line-height:10px;">4,942</span>
<span class="t td" style="right:651.60px;top:102.70px;height:10px;line-height:10px;">200</span>
<span class="t td" style="right:616.07px;top:102.70px;height:10px;line-height:10px;">290</span>
<span class="t td" style="right:580.54px;top:102.70px;height:10px;line-height:10px;">231</span>
<span class="t td" style="right:545.01px;top:102.70px;height:10px;line-height:10px;">189</span>
<span class="t td" style="right:509.48px;top:102.70px;height:10px;line-height:10px;">161</span>
<span class="t td" style="right:473.95px;top:102.70px;height:10px;line-height:10px;">176</span>
<span class="t td" style="right:438.42px;top:102.70px;height:10px;line-height:10px;">166</span>
<span class="t td" style="right:402.89px;top:102.70px;height:10px;line-height:10px;">0</span>
<span class="t td" style="right:367.36px;top:102.70px;height:10px;line-height:10px;">197</span>
<span class="t td" style="right:331.83px;top:102.70px;height:10px;line-height:10px;">231</span>
<span class="t td" style="right:296.30px;top:102.70px;height:10px;line-height:10px;">189</span>
<span class="t td" style="right:260.77px;top:102.70px;height:10px;line-height:10px;">161</span>
<span class="t td" style="right:225.24px;top:102.70px;height:10px;line-height:10px;">176</span>
<span class="t td" style="right:189.71px;top:102.70px;height:10px;line-height:10px;">166</span>
<span class="t td" style="right:154.18px;top:102.70px;height:10px;line-height:10px;">0</span>
<span class="t td" style="right:118.65px;top:102.70px;height:10px;line-height:10px;">197</span>
<span class="t td" style="right:83.12px;top:102.70px;height:10px;line-height:10px;">231</span>
<span class="t td" style="right:47.59px;top:102.70px;height:10px;line-height:10px;">189</span>
<span class="t td" style="right:12.06px;top:102.70px;height:10px;line-height:10px;">161</span>
<div style="left:185.70px;top:119.90px;width:833.50px;height:5.60px;background:#f1f1f1;"></div>
<div style="left:192.30px;top:119.90px;width:562.10px;height:5.60px;background:#c1c1c1;"></div>
<svg style="left:187.60px;top:121.20px;" width="2.4" height="3" viewBox="0 0 2.4 3"><path d="M2.2 0 L0.2 1.5 L2.2 3Z" fill="#8a8a8a"/></svg>
<svg style="left:1014.60px;top:121.20px;" width="2.4" height="3" viewBox="0 0 2.4 3"><path d="M0.2 0 L2.2 1.5 L0.2 3Z" fill="#555"/></svg>
<div class="panel" style="left:128.3px;top:135.5px;width:893.4000000000001px;height:230.0px;"><div style="left:0;top:0;width:100%;height:17.69999999999999px;background:#dbdad6;"></div></div>
<div class="sel" style="left:131.70px;top:139.30px;width:99.90px;height:11.40px;"></div>
<span class="t tb" style="left:134.30px;top:140.00px;height:10px;line-height:10px;font-size:5.15px;letter-spacing:0.048px;color:#333;">Capacity - Linear Chart</span>
<div style="left:219.70px;top:139.30px;width:0.50px;height:11.40px;background:#e6e5e2;"></div>
<svg style="left:222.95px;top:143.25px;" width="5.5" height="3.9" viewBox="0 0 5.5 3.9"><path d="M1 1 L2.75 2.9 L4.5 1" fill="none" stroke="#666" stroke-width="0.8" stroke-linecap="round" stroke-linejoin="round"/></svg>
<svg style="left:238.60px;top:142.00px;" width="5.6" height="5.2" viewBox="0 0 5.6 5.2"><circle cx="2" cy="2" r="1.5" fill="#555"/><circle cx="2" cy="2" r="1.9" fill="none" stroke="#555" stroke-width="0.8" stroke-dasharray="0.75 0.75"/><circle cx="4.3" cy="3.9" r="1" fill="#555"/><circle cx="4.3" cy="1.1" r="0.7" fill="#555"/></svg>
<span class="t tb" style="left:246.80px;top:139.60px;height:10px;line-height:10px;font-size:5.15px;letter-spacing:-0.123px;color:#777;">Recalculate Links</span>
<svg style="left:295.20px;top:142.00px;" width="5.2" height="5.2" viewBox="0 0 5.2 5.2"><circle cx="2" cy="2" r="1.5" fill="none" stroke="#666" stroke-width="0.7"/><path d="M3.1 3.1 L4.8 4.8" stroke="#666" stroke-width="0.9"/></svg>
<span class="t tb" style="left:303.30px;top:139.60px;height:10px;line-height:10px;font-size:5.15px;letter-spacing:0.045px;color:#777;">Zoom</span>
<svg style="left:0;top:0" width="1015.6" height="498" viewBox="0 0 1015.6 498"><path d="M151.75 284.45 H1012.3" stroke="#ececec" stroke-width="0.5"/><path d="M151.75 246.80 H1012.3" stroke="#ececec" stroke-width="0.5"/><path d="M151.75 209.15 H1012.3" stroke="#ececec" stroke-width="0.5"/><path d="M151.75 322.30 H1012.3" stroke="#e4e4e4" stroke-width="0.5"/><rect x="151.75" y="246.80" width="17.1" height="75.30" fill="#00a05f"/><rect x="180.82" y="246.80" width="17.1" height="75.30" fill="#00a05f"/><rect x="209.89" y="231.74" width="17.1" height="90.36" fill="#00a05f"/><rect x="238.96" y="231.74" width="17.1" height="90.36" fill="#00a05f"/><rect x="268.03" y="231.74" width="17.1" height="90.36" fill="#00a05f"/><rect x="297.10" y="231.74" width="17.1" height="90.36" fill="#00a05f"/><rect x="326.17" y="231.74" width="17.1" height="90.36" fill="#00a05f"/><rect x="355.24" y="231.74" width="17.1" height="90.36" fill="#00a05f"/><rect x="384.31" y="231.74" width="17.1" height="90.36" fill="#00a05f"/><rect x="413.38" y="231.74" width="17.1" height="90.36" fill="#00a05f"/><rect x="442.45" y="231.74" width="17.1" height="90.36" fill="#00a05f"/><rect x="471.52" y="231.74" width="17.1" height="90.36" fill="#00a05f"/><rect x="500.59" y="231.74" width="17.1" height="90.36" fill="#00a05f"/><rect x="529.66" y="231.74" width="17.1" height="90.36" fill="#00a05f"/><rect x="558.73" y="231.74" width="17.1" height="90.36" fill="#00a05f"/><rect x="587.80" y="231.74" width="17.1" height="90.36" fill="#00a05f"/><rect x="616.87" y="231.74" width="17.1" height="90.36" fill="#00a05f"/><rect x="645.94" y="231.74" width="17.1" height="90.36" fill="#00a05f"/><rect x="675.01" y="231.74" width="17.1" height="90.36" fill="#00a05f"/><rect x="704.08" y="231.74" width="17.1" height="90.36" fill="#00a05f"/><rect x="733.15" y="231.74" width="17.1" height="90.36" fill="#00a05f"/><rect x="762.22" y="231.74" width="17.1" height="90.36" fill="#00a05f"/><rect x="791.29" y="231.74" width="17.1" height="90.36" fill="#00a05f"/><rect x="820.36" y="231.74" width="17.1" height="90.36" fill="#00a05f"/><rect x="849.43" y="231.74" width="17.1" height="90.36" fill="#00a05f"/><rect x="878.50" y="231.74" width="17.1" height="90.36" fill="#00a05f"/><rect x="907.57" y="231.74" width="17.1" height="90.36" fill="#00a05f"/><rect x="936.64" y="231.74" width="17.1" height="90.36" fill="#00a05f"/><rect x="965.71" y="231.74" width="17.1" height="90.36" fill="#00a05f"/><rect x="994.78" y="231.74" width="17.1" height="90.36" fill="#00a05f"/><polyline points="160.30,249.06 189.37,249.02 218.44,238.82 247.51,252.18 276.58,260.69 305.65,243.94 334.72,279.63 363.79,177.90 392.86,284.79 421.93,311.93 451.00,262.73 480.07,263.67 509.14,249.10 538.21,295.14 567.28,322.10 596.35,295.90 625.42,312.24 654.49,262.73 683.56,263.82 712.63,249.02 741.70,295.18 770.77,322.10 799.84,314.68 828.91,313.33 857.98,307.45 887.05,292.54 916.12,292.54 945.19,322.10 974.26,314.76 1003.33,316.00" fill="none" stroke="#e63a42" stroke-width="1.15" stroke-opacity="0.8"/><text class="ax" x="146.3" y="324.70" text-anchor="end">0</text><text class="ax" x="146.3" y="287.05" text-anchor="end">1k</text><text class="ax" x="146.3" y="249.40" text-anchor="end">2k</text><text class="ax" x="146.3" y="211.75" text-anchor="end">3k</text><text class="ax" x="160.30" y="331.10" text-anchor="middle" transform="rotate(-14.5 160.30 329.2)">11-07-2018</text><text class="ax" x="189.37" y="331.10" text-anchor="middle" transform="rotate(-14.5 189.37 329.2)">11-08-2018</text><text class="ax" x="218.44" y="331.10" text-anchor="middle" transform="rotate(-14.5 218.44 329.2)">11-09-2018</text><text class="ax" x="247.51" y="331.10" text-anchor="middle" transform="rotate(-14.5 247.51 329.2)">11-10-2018</text><text class="ax" x="276.58" y="331.10" text-anchor="middle" transform="rotate(-14.5 276.58 329.2)">11-11-2018</text><text class="ax" x="305.65" y="331.10" text-anchor="middle" transform="rotate(-14.5 305.65 329.2)">11-12-2018</text><text class="ax" x="334.72" y="331.10" text-anchor="middle" transform="rotate(-14.5 334.72 329.2)">11-13-2018</text><text class="ax" x="363.79" y="331.10" text-anchor="middle" transform="rotate(-14.5 363.79 329.2)">11-14-2018</text><text class="ax" x="392.86" y="331.10" text-anchor="middle" transform="rotate(-14.5 392.86 329.2)">11-15-2018</text><text class="ax" x="421.93" y="331.10" text-anchor="middle" transform="rotate(-14.5 421.93 329.2)">11-16-2018</text><text class="ax" x="451.00" y="331.10" text-anchor="middle" transform="rotate(-14.5 451.00 329.2)">11-17-2018</text><text class="ax" x="480.07" y="331.10" text-anchor="middle" transform="rotate(-14.5 480.07 329.2)">11-18-2018</text><text class="ax" x="509.14" y="331.10" text-anchor="middle" transform="rotate(-14.5 509.14 329.2)">11-19-2018</text><text class="ax" x="538.21" y="331.10" text-anchor="middle" transform="rotate(-14.5 538.21 329.2)">11-20-2018</text><text class="ax" x="567.28" y="331.10" text-anchor="middle" transform="rotate(-14.5 567.28 329.2)">11-21-2018</text><text class="ax" x="596.35" y="331.10" text-anchor="middle" transform="rotate(-14.5 596.35 329.2)">11-22-2018</text><text class="ax" x="625.42" y="331.10" text-anchor="middle" transform="rotate(-14.5 625.42 329.2)">11-23-2018</text><text class="ax" x="654.49" y="331.10" text-anchor="middle" transform="rotate(-14.5 654.49 329.2)">11-24-2018</text><text class="ax" x="683.56" y="331.10" text-anchor="middle" transform="rotate(-14.5 683.56 329.2)">11-25-2018</text><text class="ax" x="712.63" y="331.10" text-anchor="middle" transform="rotate(-14.5 712.63 329.2)">11-26-2018</text><text class="ax" x="741.70" y="331.10" text-anchor="middle" transform="rotate(-14.5 741.70 329.2)">11-27-2018</text><text class="ax" x="770.77" y="331.10" text-anchor="middle" transform="rotate(-14.5 770.77 329.2)">11-28-2018</text><text class="ax" x="799.84" y="331.10" text-anchor="middle" transform="rotate(-14.5 799.84 329.2)">11-29-2018</text><text class="ax" x="828.91" y="331.10" text-anchor="middle" transform="rotate(-14.5 828.91 329.2)">11-30-2018</text><text class="ax" x="857.98" y="331.10" text-anchor="middle" transform="rotate(-14.5 857.98 329.2)">12-01-2018</text><text class="ax" x="887.05" y="331.10" text-anchor="middle" transform="rotate(-14.5 887.05 329.2)">12-02-2018</text><text class="ax" x="916.12" y="331.10" text-anchor="middle" transform="rotate(-14.5 916.12 329.2)">12-03-2018</text><text class="ax" x="945.19" y="331.10" text-anchor="middle" transform="rotate(-14.5 945.19 329.2)">12-04-2018</text><text class="ax" x="974.26" y="331.10" text-anchor="middle" transform="rotate(-14.5 974.26 329.2)">12-05-2018</text><text class="ax" x="1003.33" y="331.10" text-anchor="middle" transform="rotate(-14.5 1003.33 329.2)">12-06-2018</text><text class="ax" x="575.6" y="169.2" text-anchor="middle" style="font-size:6px;fill:#8a8a8a">Oven Group 1</text><rect x="527.4" y="350.8" width="5.9" height="5.9" fill="#00a05f"/><text class="ax" x="535.8" y="355.6" style="fill:#8a8a8a;font-size:5.5px">Capacity</text><path d="M566 353.9 H572.6" stroke="#e63a42" stroke-width="1.15" stroke-opacity="0.8"/><text class="ax" x="574.8" y="355.6" style="fill:#8a8a8a;font-size:5.5px">Dependent Demand</text></svg>
<div class="panel" style="left:128.3px;top:372.6px;width:893.4000000000001px;height:147.39999999999998px;"><div style="left:0;top:0;width:100%;height:17.19999999999999px;background:#dbdad6;"></div></div>
<div class="sel" style="left:131.30px;top:376.20px;width:99.70px;height:10.90px;"></div>
<span class="t tb" style="left:134.40px;top:376.65px;height:10px;line-height:10px;font-size:5.15px;letter-spacing:0.037px;color:#333;">Capacity - Future Sheet</span>
<div style="left:219.70px;top:376.20px;width:0.50px;height:10.90px;background:#e6e5e2;"></div>
<svg style="left:222.75px;top:379.90px;" width="5.5" height="3.9" viewBox="0 0 5.5 3.9"><path d="M1 1 L2.75 2.9 L4.5 1" fill="none" stroke="#666" stroke-width="0.8" stroke-linecap="round" stroke-linejoin="round"/></svg>
<svg style="left:238.20px;top:377.80px;" width="6.2" height="6" viewBox="0 0 6.2 6"><g fill="none" stroke="#999" stroke-width="0.6"><rect x="0.4" y="0.4" width="3.5" height="3.9" rx="0.5"/><rect x="2.2" y="1.7" width="3.5" height="3.9" rx="0.5" fill="#dbdad6"/></g></svg>
<span class="t tb" style="left:246.95px;top:375.80px;height:10px;line-height:10px;font-size:5.15px;letter-spacing:-0.241px;color:#777;">Copy</span>
<svg style="left:266.30px;top:378.10px;" width="5.2" height="5.4" viewBox="0 0 5.2 5.4"><rect x="0.3" y="0.7" width="3.4" height="4.4" fill="#444"/><rect x="2.2" y="2.1" width="2.7" height="3.1" fill="#fff" stroke="#444" stroke-width="0.5"/></svg>
<span class="t tb" style="left:274.40px;top:375.80px;height:10px;line-height:10px;font-size:5.15px;letter-spacing:-0.300px;color:#777;">Paste</span>
<div style="left:293.30px;top:376.00px;width:0.50px;height:11.50px;background:#d6d5d1;"></div>
<svg style="left:298.20px;top:378.10px;" width="5" height="5.4" viewBox="0 0 5 5.4"><path d="M2.5 0 V3.2 M0.9 1.9 L2.5 3.5 L4.1 1.9" fill="none" stroke="#555" stroke-width="0.8"/><path d="M0.2 4.7 H4.8" stroke="#555" stroke-width="0.9"/></svg>
<span class="t tb" style="left:306.25px;top:375.80px;height:10px;line-height:10px;font-size:5.15px;letter-spacing:-0.300px;color:#777;">Excel</span>
<svg style="left:324.00px;top:378.20px;" width="5.4" height="5.2" viewBox="0 0 5.4 5.2"><path d="M2.4 0.8 H0.4 V4.8 H4.4 V2.8" fill="none" stroke="#555" stroke-width="0.6"/><path d="M1.8 3.4 L2 2.4 L4.2 0.2 L5 1 L2.8 3.2Z" fill="#555"/></svg>
<span class="t tb" style="left:332.00px;top:375.80px;height:10px;line-height:10px;font-size:5.15px;letter-spacing:-0.191px;color:#777;">Edit</span>
<svg style="left:350.00px;top:378.20px;" width="5.6" height="5.2" viewBox="0 0 5.6 5.2"><circle cx="2" cy="2" r="1.5" fill="#555"/><circle cx="2" cy="2" r="1.9" fill="none" stroke="#555" stroke-width="0.8" stroke-dasharray="0.75 0.75"/><circle cx="4.3" cy="3.9" r="1" fill="#555"/><circle cx="4.3" cy="1.1" r="0.7" fill="#555"/></svg>
<span class="t tb" style="left:358.20px;top:375.80px;height:10px;line-height:10px;font-size:5.15px;letter-spacing:-0.135px;color:#777;">Recalculate Links</span>
<div style="left:131.30px;top:392.90px;width:888.50px;height:12.10px;background:#f8f7f6;"></div>
<div style="left:131.30px;top:405.00px;width:69.10px;height:58.80px;background:#f7f6f6;"></div>
<div style="left:200.40px;top:417.50px;width:819.40px;height:10.90px;background:#f3f4e7;"></div>
<div style="left:131.6px;top:393.3px;width:68.5px;height:11.3px;background:#f7f6f7;box-shadow:0 0 0 .5px #c3b8f3;"></div>
<div style="left:449.10px;top:452.40px;width:35.80px;height:11.40px;background:#f28b95;"></div>
<div style="left:131.30px;top:439.85px;width:69.10px;height:0.40px;background:#fcfbfb;"></div>
<div style="left:200.40px;top:439.85px;width:819.40px;height:0.40px;background:#f1f1ef;"></div>
<div style="left:131.30px;top:451.55px;width:69.10px;height:0.40px;background:#fcfbfb;"></div>
<div style="left:200.40px;top:451.55px;width:819.40px;height:0.40px;background:#f1f1ef;"></div>
<span class="t th" style="right:789.80px;top:393.80px;height:10px;line-height:10px;">11-07-2018</span>
<span class="t th" style="right:754.27px;top:393.80px;height:10px;line-height:10px;">11-08-2018</span>
<span class="t th" style="right:718.74px;top:393.80px;height:10px;line-height:10px;">11-09-2018</span>
<span class="t th" style="right:683.21px;top:393.80px;height:10px;line-height:10px;">11-10-2018</span>
<span class="t th" style="right:647.68px;top:393.80px;height:10px;line-height:10px;">11-11-2018</span>
<span class="t th" style="right:612.15px;top:393.80px;height:10px;line-height:10px;">11-12-2018</span>
<span class="t th" style="right:576.62px;top:393.80px;height:10px;line-height:10px;">11-13-2018</span>
<span class="t th" style="right:541.09px;top:393.80px;height:10px;line-height:10px;">11-14-2018</span>
<span class="t th" style="right:505.56px;top:393.80px;height:10px;line-height:10px;">11-15-2018</span>
<span class="t th" style="right:470.03px;top:393.80px;height:10px;line-height:10px;">11-16-2018</span>
<span class="t th" style="right:434.50px;top:393.80px;height:10px;line-height:10px;">11-17-2018</span>
<span class="t th" style="right:398.97px;top:393.80px;height:10px;line-height:10px;">11-18-2018</span>
<span class="t th" style="right:363.44px;top:393.80px;height:10px;line-height:10px;">11-19-2018</span>
<span class="t th" style="right:327.91px;top:393.80px;height:10px;line-height:10px;">11-20-2018</span>
<span class="t th" style="right:292.38px;top:393.80px;height:10px;line-height:10px;">11-21-2018</span>
<span class="t th" style="right:256.85px;top:393.80px;height:10px;line-height:10px;">11-22-2018</span>
<span class="t th" style="right:221.32px;top:393.80px;height:10px;line-height:10px;">11-23-2018</span>
<span class="t th" style="right:185.79px;top:393.80px;height:10px;line-height:10px;">11-24-2018</span>
<span class="t th" style="right:150.26px;top:393.80px;height:10px;line-height:10px;">11-25-2018</span>
<span class="t th" style="right:114.73px;top:393.80px;height:10px;line-height:10px;">11-26-2018</span>
<span class="t th" style="right:79.20px;top:393.80px;height:10px;line-height:10px;">11-27-2018</span>
<span class="t th" style="right:43.67px;top:393.80px;height:10px;line-height:10px;">11-28-2018</span>
<span class="t th" style="right:8.14px;top:393.80px;height:10px;line-height:10px;">11-29-2018</span>
<span class="t th" style="left:133.50px;top:406.20px;height:10px;line-height:10px;">Capacity</span>
<span class="t td" style="right:789.80px;top:406.20px;height:10px;line-height:10px;">2,000</span>
<span class="t td" style="right:754.27px;top:406.20px;height:10px;line-height:10px;">2,000</span>
<span class="t td" style="right:718.74px;top:406.20px;height:10px;line-height:10px;">2,400</span>
<span class="t td" style="right:683.21px;top:406.20px;height:10px;line-height:10px;">2,400</span>
<span class="t td" style="right:647.68px;top:406.20px;height:10px;line-height:10px;">2,400</span>
<span class="t td" style="right:612.15px;top:406.20px;height:10px;line-height:10px;">2,400</span>
<span class="t td" style="right:576.62px;top:406.20px;height:10px;line-height:10px;">2,400</span>
<span class="t td" style="right:541.09px;top:406.20px;height:10px;line-height:10px;">2,400</span>
<span class="t td" style="right:505.56px;top:406.20px;height:10px;line-height:10px;">2,400</span>
<span class="t td" style="right:470.03px;top:406.20px;height:10px;line-height:10px;">2,400</span>
<span class="t td" style="right:434.50px;top:406.20px;height:10px;line-height:10px;">2,400</span>
<span class="t td" style="right:398.97px;top:406.20px;height:10px;line-height:10px;">2,400</span>
<span class="t td" style="right:363.44px;top:406.20px;height:10px;line-height:10px;">2,400</span>
<span class="t td" style="right:327.91px;top:406.20px;height:10px;line-height:10px;">2,400</span>
<span class="t td" style="right:292.38px;top:406.20px;height:10px;line-height:10px;">2,400</span>
<span class="t td" style="right:256.85px;top:406.20px;height:10px;line-height:10px;">2,400</span>
<span class="t td" style="right:221.32px;top:406.20px;height:10px;line-height:10px;">2,400</span>
<span class="t td" style="right:185.79px;top:406.20px;height:10px;line-height:10px;">2,400</span>
<span class="t td" style="right:150.26px;top:406.20px;height:10px;line-height:10px;">2,400</span>
<span class="t td" style="right:114.73px;top:406.20px;height:10px;line-height:10px;">2,400</span>
<span class="t td" style="right:79.20px;top:406.20px;height:10px;line-height:10px;">2,400</span>
<span class="t td" style="right:43.67px;top:406.20px;height:10px;line-height:10px;">2,400</span>
<span class="t td" style="right:8.14px;top:406.20px;height:10px;line-height:10px;">2,400</span>
<span class="t th" style="left:133.50px;top:417.92px;height:10px;line-height:10px;">Adjusted Capacity</span>
<span class="t tdb" style="right:718.74px;top:417.92px;height:10px;line-height:10px;">2,400</span>
<span class="t tdb" style="right:683.21px;top:417.92px;height:10px;line-height:10px;">2,400</span>
<span class="t tdb" style="right:647.68px;top:417.92px;height:10px;line-height:10px;">2,400</span>
<span class="t tdb" style="right:612.15px;top:417.92px;height:10px;line-height:10px;">2,400</span>
<span class="t tdb" style="right:576.62px;top:417.92px;height:10px;line-height:10px;">2,400</span>
<span class="t tdb" style="right:541.09px;top:417.92px;height:10px;line-height:10px;">2,400</span>
<span class="t th" style="left:133.50px;top:429.64px;height:10px;line-height:10px;">Dependent Demand</span>
<span class="t td" style="right:789.80px;top:429.64px;height:10px;line-height:10px;">1,940</span>
<span class="t td" style="right:754.27px;top:429.64px;height:10px;line-height:10px;">1,941</span>
<span class="t td" style="right:718.74px;top:429.64px;height:10px;line-height:10px;">2,212</span>
<span class="t td" style="right:683.21px;top:429.64px;height:10px;line-height:10px;">1,857</span>
<span class="t td" style="right:647.68px;top:429.64px;height:10px;line-height:10px;">1,631</span>
<span class="t td" style="right:612.15px;top:429.64px;height:10px;line-height:10px;">2,076</span>
<span class="t td" style="right:576.62px;top:429.64px;height:10px;line-height:10px;">1,128</span>
<span class="t td" style="right:541.09px;top:429.64px;height:10px;line-height:10px;">3,830</span>
<span class="t td" style="right:505.56px;top:429.64px;height:10px;line-height:10px;">991</span>
<span class="t td" style="right:470.03px;top:429.64px;height:10px;line-height:10px;">270</span>
<span class="t td" style="right:434.50px;top:429.64px;height:10px;line-height:10px;">1,577</span>
<span class="t td" style="right:398.97px;top:429.64px;height:10px;line-height:10px;">1,552</span>
<span class="t td" style="right:363.44px;top:429.64px;height:10px;line-height:10px;">1,939</span>
<span class="t td" style="right:327.91px;top:429.64px;height:10px;line-height:10px;">716</span>
<span class="t td" style="right:292.38px;top:429.64px;height:10px;line-height:10px;">0</span>
<span class="t td" style="right:256.85px;top:429.64px;height:10px;line-height:10px;">696</span>
<span class="t td" style="right:221.32px;top:429.64px;height:10px;line-height:10px;">262</span>
<span class="t td" style="right:185.79px;top:429.64px;height:10px;line-height:10px;">1,577</span>
<span class="t td" style="right:150.26px;top:429.64px;height:10px;line-height:10px;">1,548</span>
<span class="t td" style="right:114.73px;top:429.64px;height:10px;line-height:10px;">1,941</span>
<span class="t td" style="right:79.20px;top:429.64px;height:10px;line-height:10px;">715</span>
<span class="t td" style="right:43.67px;top:429.64px;height:10px;line-height:10px;">0</span>
<span class="t td" style="right:8.14px;top:429.64px;height:10px;line-height:10px;">197</span>
<span class="t th" style="left:133.50px;top:441.36px;height:10px;line-height:10px;">Unused Capacity</span>
<span class="t td" style="right:789.80px;top:441.36px;height:10px;line-height:10px;">60</span>
<span class="t td" style="right:754.27px;top:441.36px;height:10px;line-height:10px;">59</span>
<span class="t td" style="right:718.74px;top:441.36px;height:10px;line-height:10px;">188</span>
<span class="t td" style="right:683.21px;top:441.36px;height:10px;line-height:10px;">543</span>
<span class="t td" style="right:647.68px;top:441.36px;height:10px;line-height:10px;">769</span>
<span class="t td" style="right:612.15px;top:441.36px;height:10px;line-height:10px;">324</span>
<span class="t td" style="right:576.62px;top:441.36px;height:10px;line-height:10px;">1,272</span>
<span class="t td" style="right:541.09px;top:441.36px;height:10px;line-height:10px;">-1,430</span>
<span class="t td" style="right:505.56px;top:441.36px;height:10px;line-height:10px;">1,409</span>
<span class="t td" style="right:470.03px;top:441.36px;height:10px;line-height:10px;">2,130</span>
<span class="t td" style="right:434.50px;top:441.36px;height:10px;line-height:10px;">823</span>
<span class="t td" style="right:398.97px;top:441.36px;height:10px;line-height:10px;">848</span>
<span class="t td" style="right:363.44px;top:441.36px;height:10px;line-height:10px;">461</span>
<span class="t td" style="right:327.91px;top:441.36px;height:10px;line-height:10px;">1,684</span>
<span class="t td" style="right:292.38px;top:441.36px;height:10px;line-height:10px;">2,400</span>
<span class="t td" style="right:256.85px;top:441.36px;height:10px;line-height:10px;">1,704</span>
<span class="t td" style="right:221.32px;top:441.36px;height:10px;line-height:10px;">2,138</span>
<span class="t td" style="right:185.79px;top:441.36px;height:10px;line-height:10px;">823</span>
<span class="t td" style="right:150.26px;top:441.36px;height:10px;line-height:10px;">852</span>
<span class="t td" style="right:114.73px;top:441.36px;height:10px;line-height:10px;">459</span>
<span class="t td" style="right:79.20px;top:441.36px;height:10px;line-height:10px;">1,685</span>
<span class="t td" style="right:43.67px;top:441.36px;height:10px;line-height:10px;">2,400</span>
<span class="t td" style="right:8.14px;top:441.36px;height:10px;line-height:10px;">2,203</span>
<span class="t th" style="left:133.50px;top:453.08px;height:10px;line-height:10px;">Capacity Utilization</span>
<span class="t td" style="right:789.80px;top:453.08px;height:10px;line-height:10px;">97</span>
<span class="t td" style="right:754.27px;top:453.08px;height:10px;line-height:10px;">97</span>
<span class="t td" style="right:718.74px;top:453.08px;height:10px;line-height:10px;">92</span>
<span class="t td" style="right:683.21px;top:453.08px;height:10px;line-height:10px;">77</span>
<span class="t td" style="right:647.68px;top:453.08px;height:10px;line-height:10px;">68</span>
<span class="t td" style="right:612.15px;top:453.08px;height:10px;line-height:10px;">86</span>
<span class="t td" style="right:576.62px;top:453.08px;height:10px;line-height:10px;">47</span>
<span class="t td" style="right:541.09px;top:453.08px;height:10px;line-height:10px;color:#5a2040;">160</span>
<span class="t td" style="right:505.56px;top:453.08px;height:10px;line-height:10px;">41</span>
<span class="t td" style="right:470.03px;top:453.08px;height:10px;line-height:10px;">11</span>
<span class="t td" style="right:434.50px;top:453.08px;height:10px;line-height:10px;">66</span>
<span class="t td" style="right:398.97px;top:453.08px;height:10px;line-height:10px;">65</span>
<span class="t td" style="right:363.44px;top:453.08px;height:10px;line-height:10px;">81</span>
<span class="t td" style="right:327.91px;top:453.08px;height:10px;line-height:10px;">30</span>
<span class="t td" style="right:292.38px;top:453.08px;height:10px;line-height:10px;">0</span>
<span class="t td" style="right:256.85px;top:453.08px;height:10px;line-height:10px;">29</span>
<span class="t td" style="right:221.32px;top:453.08px;height:10px;line-height:10px;">11</span>
<span class="t td" style="right:185.79px;top:453.08px;height:10px;line-height:10px;">66</span>
<span class="t td" style="right:150.26px;top:453.08px;height:10px;line-height:10px;">65</span>
<span class="t td" style="right:114.73px;top:453.08px;height:10px;line-height:10px;">81</span>
<span class="t td" style="right:79.20px;top:453.08px;height:10px;line-height:10px;">30</span>
<span class="t td" style="right:43.67px;top:453.08px;height:10px;line-height:10px;">0</span>
<span class="t td" style="right:8.14px;top:453.08px;height:10px;line-height:10px;">8</span>
</div></body></html>
